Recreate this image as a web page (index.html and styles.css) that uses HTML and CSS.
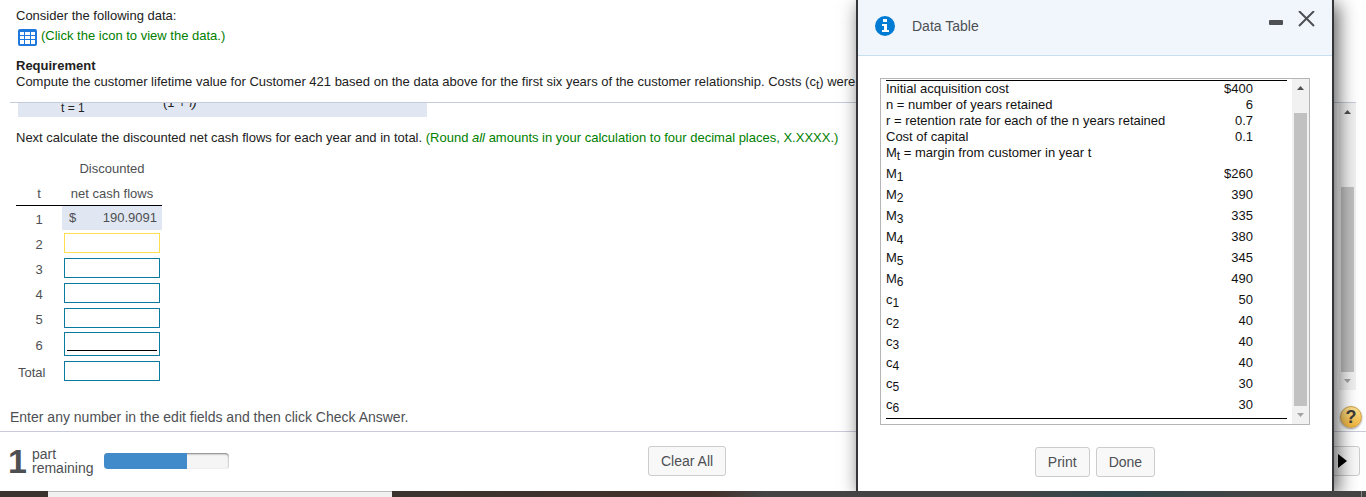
FILE: index.html
```
<!DOCTYPE html>
<html lang="en">

<head>
    <meta charset="UTF-8">
    <meta name="viewport" content="width=device-width, initial-scale=1.0">
    <title>Customer lifetime value</title>
    <link rel="stylesheet" href="styles.css">
</head>

<body>
    <div class="player">

        <div class="question">
            <p>Consider the following data:</p>
            <a class="data-link" href="#data-table">
                <svg width="19" height="17" viewBox="0 0 19 17">
                    <rect width="19" height="17" rx="2" fill="#1f78dc" />
                    <path d="M2 3h4v3H2zM7 3h5v3H7zM13 3h4v3h-4zM2 7h4v3H2zM7 7h5v3H7zM13 7h4v3h-4zM2 11h4v4H2zM7 11h5v4H7zM13 11h4v4h-4z" fill="#fff" />
                </svg>
                <span>(Click the icon to view the data.)</span>
            </a>
            <h1>Requirement</h1>
            <p>Compute the customer lifetime value for Customer 421 based on the data above for the first six years of the customer relationship. Costs (c<sub>t</sub>) were</p>
        </div>

        <div class="work">
            <div class="work-content">
                <div class="formula">
                    <span class="formula-sum">t = 1</span>
                    <span class="formula-rate">(1 + <i>i)</i></span>
                </div>
                <p class="step">Next calculate the discounted net cash flows for each year and in total. <span class="note">(Round <i>all</i> amounts in your calculation to four decimal places, X.XXXX.)</span></p>

                <table class="flows">
                    <thead>
                        <tr>
                            <th></th>
                            <th>Discounted</th>
                        </tr>
                        <tr>
                            <th>t</th>
                            <th>net cash flows</th>
                        </tr>
                    </thead>
                    <tbody>
                        <tr>
                            <td>1</td>
                            <td class="given">
                                <div class="amount"><span>$</span><span>190.9091</span></div>
                            </td>
                        </tr>
                        <tr>
                            <td><label for="flow2">2</label></td>
                            <td><input type="text" id="flow2" class="active"></td>
                        </tr>
                        <tr>
                            <td><label for="flow3">3</label></td>
                            <td><input type="text" id="flow3"></td>
                        </tr>
                        <tr>
                            <td><label for="flow4">4</label></td>
                            <td><input type="text" id="flow4"></td>
                        </tr>
                        <tr>
                            <td><label for="flow5">5</label></td>
                            <td><input type="text" id="flow5"></td>
                        </tr>
                        <tr class="last">
                            <td><label for="flow6">6</label></td>
                            <td><input type="text" id="flow6"></td>
                        </tr>
                        <tr class="total">
                            <td><label for="total">Total</label></td>
                            <td><input type="text" id="total"></td>
                        </tr>
                    </tbody>
                </table>
            </div>

            <div class="scrollbar page-scroll">
                <span class="arrow up"></span>
                <span class="thumb"></span>
                <span class="arrow down"></span>
            </div>
        </div>

        <div class="hint">
            <p>Enter any number in the edit fields and then click Check Answer.</p>
            <button type="button" class="help" aria-label="Help">?</button>
        </div>

        <div class="controls">
            <div class="parts">
                <strong>1</strong>
                <span>part<br>remaining</span>
                <div class="progress">
                    <div class="progress-fill" style="width: 66%"></div>
                </div>
            </div>
            <button type="button" class="btn">Clear All</button>
            <button type="button" class="btn next" aria-label="Next">
                <svg width="9" height="14" viewBox="0 0 9 14">
                    <path d="M0 0l9 7-9 7z" fill="#000" />
                </svg>
            </button>
        </div>

        <div class="dialog" id="data-table" role="dialog" aria-labelledby="dialog-title">
            <div class="dialog-head">
                <svg width="20" height="20" viewBox="0 0 20 20">
                    <circle cx="10" cy="10" r="10" fill="#007bd3" />
                    <path d="M8 3h4v3H8zM7 8h5v6h2v2H7v-2h2v-4H7z" fill="#fff" />
                </svg>
                <h2 id="dialog-title">Data Table</h2>
                <button type="button" class="icon-btn" aria-label="Minimize">
                    <svg width="14" height="5" viewBox="0 0 14 5">
                        <rect width="14" height="5" rx="1" fill="#4d4f53" />
                    </svg>
                </button>
                <button type="button" class="icon-btn" aria-label="Close">
                    <svg width="17" height="16" viewBox="0 0 17 16">
                        <path d="M1 0l15 15M16 0L1 15" stroke="#4d4f53" stroke-width="2" fill="none" />
                    </svg>
                </button>
            </div>

            <div class="dialog-frame">
                <div class="dialog-data">
                    <table class="data">
                        <tbody class="general">
                            <tr><td>Initial acquisition cost</td><td>$400</td></tr>
                            <tr><td>n = number of years retained</td><td>6</td></tr>
                            <tr><td>r = retention rate for each of the n years retained</td><td>0.7</td></tr>
                            <tr><td>Cost of capital</td><td>0.1</td></tr>
                            <tr><td>M<sub>t</sub> = margin from customer in year t</td><td></td></tr>
                        </tbody>
                        <tbody class="yearly">
                            <tr><td>M<sub>1</sub></td><td>$260</td></tr>
                            <tr><td>M<sub>2</sub></td><td>390</td></tr>
                            <tr><td>M<sub>3</sub></td><td>335</td></tr>
                            <tr><td>M<sub>4</sub></td><td>380</td></tr>
                            <tr><td>M<sub>5</sub></td><td>345</td></tr>
                            <tr><td>M<sub>6</sub></td><td>490</td></tr>
                            <tr><td>c<sub>1</sub></td><td>50</td></tr>
                            <tr><td>c<sub>2</sub></td><td>40</td></tr>
                            <tr><td>c<sub>3</sub></td><td>40</td></tr>
                            <tr><td>c<sub>4</sub></td><td>40</td></tr>
                            <tr><td>c<sub>5</sub></td><td>30</td></tr>
                            <tr><td>c<sub>6</sub></td><td>30</td></tr>
                        </tbody>
                    </table>
                </div>
                <div class="scrollbar">
                    <span class="arrow up"></span>
                    <span class="thumb"></span>
                    <span class="arrow down"></span>
                </div>
            </div>

            <div class="dialog-foot">
                <button type="button" class="btn">Print</button>
                <button type="button" class="btn">Done</button>
            </div>
        </div>
    </div>

    <div class="taskbar">
        <div class="taskbar-search"></div>
        <div class="taskbar-tray"></div>
    </div>
</body>

</html>
```

FILE: styles.css
```
* {
    box-sizing: border-box;
    margin: 0;
    padding: 0;
}

body {
    display: flex;
    flex-direction: column;
    min-height: 100vh;
    font-family: "Liberation Sans", Arial, sans-serif;
    font-size: 13px;
    line-height: 16px;
    color: #222;
    background: #fff;
}

svg {
    display: block;
    flex: none;
}

sub {
    font-size: 12px;
    line-height: 0;
    vertical-align: -3px;
}

button {
    font-family: inherit;
    cursor: pointer;
}

.player {
    position: relative;
    flex: 1;
    display: flex;
    flex-direction: column;
    overflow: hidden;
}

/* question text */

.question {
    height: 103px;
    margin: 0 10px;
    padding: 8px 0 0 6px;
    border-bottom: 1px solid #c5cbd9;
    white-space: nowrap;
    overflow: hidden;
}

.question h1 {
    margin-top: 10px;
    font-size: 13px;
    line-height: 16px;
}

.data-link {
    display: flex;
    gap: 4px;
    height: 24px;
    padding: 4px 0 0 2px;
    color: #008000;
    text-decoration: none;
}

.data-link svg {
    margin-top: 1px;
}

.note {
    color: #008000;
}

/* answer area */

.work {
    flex: 1;
    display: flex;
    margin: 0 10px;
}

.work-content {
    flex: 1;
    padding-left: 6px;
}

.formula {
    display: flex;
    align-items: flex-end;
    width: 409px;
    height: 14px;
    margin-left: 2px;
    padding-left: 43px;
    font-size: 12px;
    line-height: 12px;
    background: #e1e7f2;
    overflow: hidden;
}

.formula-sum {
    width: 102px;
    padding-bottom: 3px;
}

.formula-rate {
    padding-bottom: 8px;
    font-size: 13px;
}

.step {
    margin: 13px 0 10px;
    white-space: nowrap;
}

.flows {
    border-collapse: collapse;
    color: #4d4f53;
}

.flows th {
    height: 25px;
    font-weight: normal;
    text-align: center;
}

.flows thead tr:last-child th {
    height: 24px;
    padding-top: 2px;
    border-bottom: 1px solid #000;
}

.flows td {
    width: 100px;
    height: 25px;
    text-align: center;
    vertical-align: middle;
}

.flows td:first-child {
    width: 46px;
    padding-top: 4px;
}

.flows .total td:first-child {
    padding-left: 2px;
    text-align: left;
}

.flows .last td {
    height: 28px;
}

.flows .given {
    background: #e1e7f2;
}

.amount {
    display: flex;
    justify-content: space-between;
    padding: 0 5px 0 7px;
}

.flows input {
    display: block;
    width: 96px;
    height: 20px;
    margin: 0 auto 0 2px;
    padding: 0 4px;
    border: 1px solid #0a7aa0;
    font: inherit;
    text-align: right;
    background: #fff;
}

.flows input.active {
    border-color: #ffdf4f;
}

.flows .last input {
    height: 24px;
    background: linear-gradient(#000, #000) center bottom 4px / 90px 1px no-repeat #fff;
}

/* scrollbars */

.scrollbar {
    flex: none;
    display: flex;
    flex-direction: column;
    align-items: center;
    width: 17px;
    background: #f1f1f1;
}

.arrow {
    width: 7px;
    height: 4px;
    margin: 7px 0;
    background: #505050;
    clip-path: polygon(50% 0, 100% 100%, 0 100%);
}

.arrow.down {
    background: #a3a3a3;
    clip-path: polygon(0 0, 100% 0, 50% 100%);
}

.thumb {
    flex: 1;
    width: 13px;
    margin-top: 16px;
    background: #c1c1c1;
}

.page-scroll .thumb {
    margin-top: 66px;
}

/* bottom of the player */

.hint {
    display: flex;
    justify-content: space-between;
    height: 42px;
    padding: 16px 4px 0 10px;
    border-bottom: 1px solid #c9cbdb;
    font-size: 14px;
    line-height: 22px;
    color: #4d4f53;
}

.help {
    width: 22px;
    height: 22px;
    border: 1px solid #cfa24a;
    border-radius: 50%;
    font-size: 18px;
    font-weight: bold;
    line-height: 20px;
    color: #3b3b3b;
    background: linear-gradient(#fbe08f, #f2b63c);
    box-shadow: 0 1px 2px rgba(0, 0, 0, .4);
}

.controls {
    display: flex;
    align-items: center;
    height: 59px;
    padding: 0 6px 2px 8px;
}

.parts {
    display: flex;
    align-items: center;
    width: 640px;
    font-size: 14px;
    line-height: 14px;
    color: #4d4f53;
}

.parts strong {
    width: 24px;
    font-size: 34px;
    line-height: 34px;
}

.progress {
    width: 125px;
    height: 16px;
    margin-left: 11px;
    border-radius: 4px;
    background: #f5f5f5;
    box-shadow: inset 0 1px 2px rgba(0, 0, 0, .5);
    overflow: hidden;
}

.progress-fill {
    height: 100%;
    background: #428bca;
}

.btn {
    height: 30px;
    padding: 0 12px;
    border: 1px solid #ccc;
    border-radius: 3px;
    font-size: 14px;
    line-height: 28px;
    color: #4d4f53;
    background: #f8f8f8;
}

.next {
    margin-left: auto;
}

/* data table dialog */

.dialog {
    position: absolute;
    top: 0;
    right: 32px;
    bottom: 0;
    display: flex;
    flex-direction: column;
    width: 478px;
    border: solid #333538;
    border-width: 0 2px;
    background: #fff;
    box-shadow: 4px 4px 18px rgba(0, 0, 0, .65);
}

.dialog-head {
    display: flex;
    align-items: center;
    height: 56px;
    padding: 0 17px 4px;
    border-bottom: 1px solid #c8dff0;
    background: #f1f6fd;
}

.dialog-head h2 {
    flex: 1;
    margin-left: 17px;
    font-size: 14px;
    font-weight: normal;
    color: #4d4f53;
}

.icon-btn {
    margin-left: 15px;
    padding-bottom: 14px;
    border: 0;
    background: none;
}

.icon-btn:first-of-type {
    padding-bottom: 6px;
}

.dialog-frame {
    flex: 1;
    display: flex;
    margin: 22px 22px 0;
    border: 1px solid #b5b5b5;
}

.dialog-data {
    flex: 1;
    padding: 1px 5px 0;
}

.data {
    width: 100%;
    border-top: 1px solid #000;
    border-bottom: 1px solid #000;
    border-spacing: 0;
    padding-bottom: 3px;
    color: #111;
}

.data td {
    height: 16px;
    line-height: 16px;
}

.data td:last-child {
    padding-right: 34px;
    text-align: right;
}

.data .general tr:last-child td {
    height: 18px;
    vertical-align: top;
}

.data .yearly td {
    height: 21px;
}

.dialog-foot {
    display: flex;
    justify-content: center;
    gap: 6px;
    padding: 22px 0 14px;
}

/* taskbar */

.taskbar {
    display: flex;
    height: 6px;
    padding-left: 48px;
    background: linear-gradient(90deg, #3b342e 0, #3b342e 30%, #43302a 52%, #444 56%, #444 74%, #30474b 82%, #444 92%);
}

.taskbar-search {
    width: 344px;
    border-top: 1px solid #bbb;
    background: #f1f1f1;
}

.taskbar-tray {
    width: 5px;
    margin-left: auto;
    border-left: 1px solid #888;
}
```
